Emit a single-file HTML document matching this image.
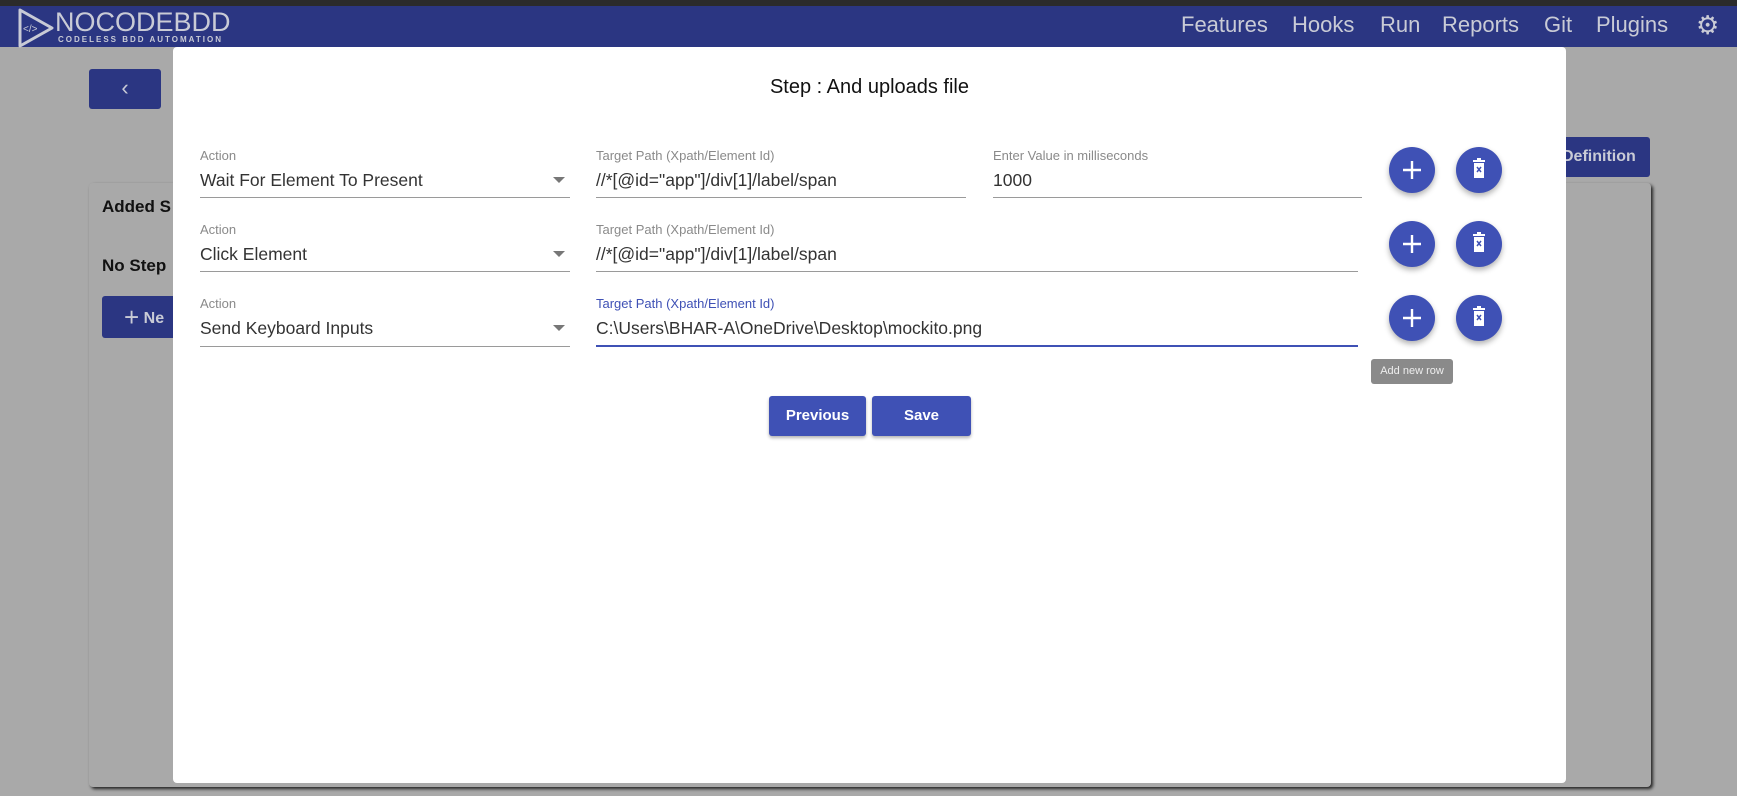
<!DOCTYPE html>
<html><head><meta charset="utf-8"><style>
*{box-sizing:border-box;margin:0;padding:0}
body{width:1737px;height:796px;overflow:hidden;background:#a9a9a9;font-family:"Liberation Sans",Roboto,sans-serif;position:relative}
.abs{position:absolute}
.top{left:0;top:0;width:1737px;height:6px;background:#2b2b2b}
.nav{left:0;top:6px;width:1737px;height:41px;background:#2b3682}
.nav .lk{position:absolute;top:6px;color:#c9cbd6;font-size:22px}
.card{left:89px;top:183px;width:1562px;height:604px;background:#a9a9a9;border-radius:4px;box-shadow:2px 2px 3px #222}
.modal{left:173px;top:47px;width:1393px;height:736px;background:#fff;border-radius:4px}
.lbl{position:absolute;font-size:13px;color:#8a8a8a}
.val{position:absolute;font-size:17.5px;color:#333}
.line{position:absolute;height:1px;background:#9a9a9a}
.arrow{position:absolute;width:0;height:0;border-left:6px solid transparent;border-right:6px solid transparent;border-top:6px solid #777}
.fab{position:absolute;width:46px;height:46px;border-radius:50%;background:#3f51b5;box-shadow:0 3px 6px rgba(0,0,0,.3)}
.btn{position:absolute;height:40px;background:#3f51b5;color:#fff;font-weight:bold;font-size:15px;border-radius:3px;text-align:center;line-height:40px;box-shadow:0 2px 3px rgba(0,0,0,.3)}
</style></head><body>
<div class="abs top"></div>
<div class="abs nav">
<svg class="abs" style="left:16px;top:1px" width="40" height="42" viewBox="0 0 40 42"><path d="M4 3 L36 21 L4 39 Z" fill="none" stroke="#c9cbd6" stroke-width="3" stroke-linejoin="round"/><text x="7" y="25" font-size="10" fill="#c9cbd6" font-family="Liberation Sans">&lt;/&gt;</text></svg>
<div class="abs" style="left:55px;top:1px;color:#c9cbd6;font-size:27px;letter-spacing:0px">NOCODEBDD</div>
<div class="abs" style="left:58px;top:29px;color:#c9cbd6;font-size:8px;letter-spacing:2px;font-weight:bold">CODELESS BDD AUTOMATION</div>
<div class="lk" style="left:1181px">Features</div>
<div class="lk" style="left:1292px">Hooks</div>
<div class="lk" style="left:1380px">Run</div>
<div class="lk" style="left:1442px">Reports</div>
<div class="lk" style="left:1544px">Git</div>
<div class="lk" style="left:1596px">Plugins</div>
<div class="abs" style="left:1696px;top:4px;color:#c9cbd6;font-size:26px">⚙</div>
</div>
<div class="abs" style="left:89px;top:69px;width:72px;height:40px;background:#2b3682;border-radius:3px;color:#c9cbd6;text-align:center;line-height:38px;font-size:22px">‹</div>
<div class="abs" style="left:1500px;top:137px;width:150px;height:40px;background:#2b3682;border-radius:3px;color:#c9cbd6;line-height:40px;font-size:16px;font-weight:bold;padding-left:62px">Definition</div>
<div class="abs card"></div>
<div class="abs" style="left:102px;top:197px;font-weight:bold;font-size:17px;color:#111">Added S</div>
<div class="abs" style="left:102px;top:256px;font-weight:bold;font-size:17px;color:#111">No Step</div>
<div class="abs" style="left:102px;top:296px;width:90px;height:42px;background:#2b3682;border-radius:3px;color:#c9cbd6;font-size:16px;font-weight:bold;line-height:42px;padding-left:22px"><span style="font-size:26px;font-weight:normal;vertical-align:-3px">+</span> Ne</div>

<div class="abs modal"></div>
<div class="abs" style="left:173px;top:76px;width:1393px;text-align:center;font-size:20px;color:#111">Step : And uploads file</div>

<div class="lbl" style="left:200px;top:148px">Action</div>
<div class="val" style="left:200px;top:170px">Wait For Element To Present</div>
<div class="arrow" style="left:553px;top:177px"></div>
<div class="line" style="left:200px;top:197px;width:370px"></div>
<div class="lbl" style="left:596px;top:148px">Target Path (Xpath/Element Id)</div>
<div class="val" style="left:596px;top:170px">//*[@id="app"]/div[1]/label/span</div>
<div class="line" style="left:596px;top:197px;width:370px"></div>
<div class="lbl" style="left:993px;top:148px">Enter Value in milliseconds</div>
<div class="val" style="left:993px;top:170px">1000</div>
<div class="line" style="left:993px;top:197px;width:369px"></div>

<div class="lbl" style="left:200px;top:222px">Action</div>
<div class="val" style="left:200px;top:244px">Click Element</div>
<div class="arrow" style="left:553px;top:251px"></div>
<div class="line" style="left:200px;top:271px;width:370px"></div>
<div class="lbl" style="left:596px;top:222px">Target Path (Xpath/Element Id)</div>
<div class="val" style="left:596px;top:244px">//*[@id="app"]/div[1]/label/span</div>
<div class="line" style="left:596px;top:271px;width:762px"></div>

<div class="lbl" style="left:200px;top:296px">Action</div>
<div class="val" style="left:200px;top:318px">Send Keyboard Inputs</div>
<div class="arrow" style="left:553px;top:325px"></div>
<div class="line" style="left:200px;top:346px;width:370px"></div>
<div class="lbl" style="left:596px;top:296px;color:#3f51b5">Target Path (Xpath/Element Id)</div>
<div class="val" style="left:596px;top:318px">C:\Users\BHAR-A\OneDrive\Desktop\mockito.png</div>
<div class="line" style="left:596px;top:345px;width:762px;height:2px;background:#3f51b5"></div>

<div class="fab" style="left:1389px;top:147px"></div><div class="fab" style="left:1456px;top:147px"></div>
<div class="fab" style="left:1389px;top:221px"></div><div class="fab" style="left:1456px;top:221px"></div>
<div class="fab" style="left:1389px;top:295px"></div><div class="fab" style="left:1456px;top:295px"></div>
<svg class="abs" style="left:0;top:0" width="1737" height="796">
<g stroke="#fff" stroke-width="2.4">
<path d="M1412 161v18M1403 170h18"/><path d="M1412 235v18M1403 244h18"/><path d="M1412 309v18M1403 318h18"/>
</g>
<g fill="#fff">
<path d="M1473 160h12v2h-12z M1477 158h4v2h-4z M1474 163h10v15h-10z"/>
<path d="M1473 234h12v2h-12z M1477 232h4v2h-4z M1474 237h10v15h-10z"/>
<path d="M1473 308h12v2h-12z M1477 306h4v2h-4z M1474 311h10v15h-10z"/>
</g>
<g stroke="#3f51b5" stroke-width="1.5">
<path d="M1477 167l4 5M1481 167l-4 5M1477 241l4 5M1481 241l-4 5M1477 315l4 5M1481 315l-4 5"/>
</g>
</svg>
<div class="abs" style="left:1371px;top:359px;width:82px;height:25px;background:#8a8a8a;border-radius:3px;color:#eee;font-size:11px;text-align:center;line-height:25px">Add new row</div>

<div class="btn" style="left:769px;top:396px;width:97px">Previous</div>
<div class="btn" style="left:872px;top:396px;width:99px">Save</div>
</body></html>
